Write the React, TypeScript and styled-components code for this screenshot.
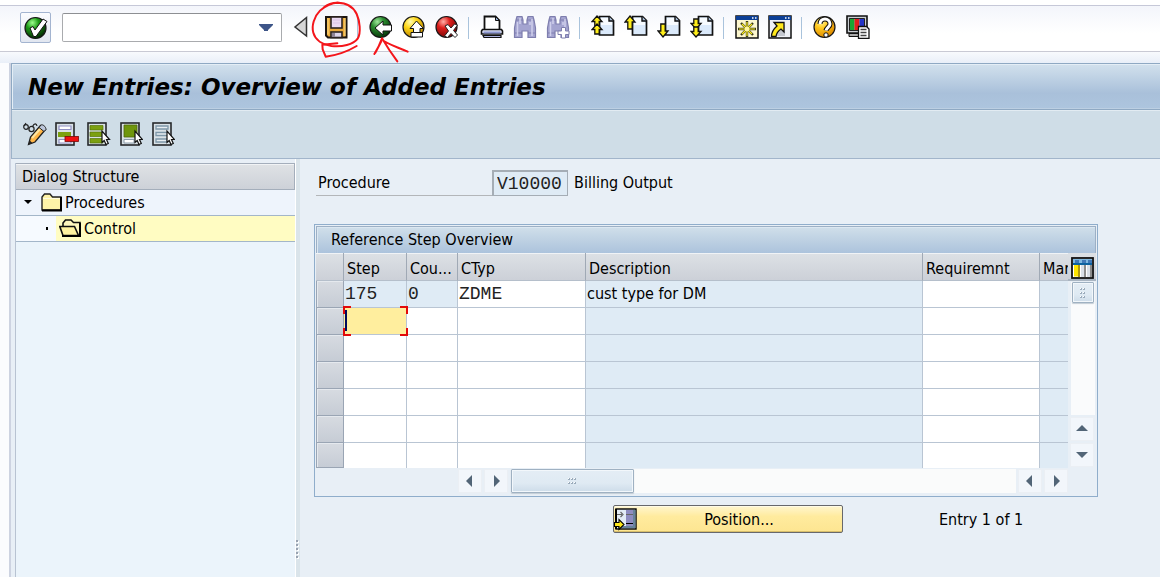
import React from "react";
import styled, { createGlobalStyle, css } from "styled-components";

const ui = `"DejaVu Sans Condensed", "Noto Sans", sans-serif`;
const mono = `"Liberation Mono", monospace`;

const GlobalStyle = createGlobalStyle`
  *, *::before, *::after { box-sizing: border-box; }
  body { margin: 0; background: #e8eff6; font-family: ${ui}; font-size: 16px; color: #000; }
  button, input { font: inherit; color: inherit; margin: 0; padding: 0; }
`;

const Page = styled.div`
  position: relative;
  display: flex;
  flex-direction: column;
  min-height: 100vh;
  background: #fff;
`;

const EnterButton = styled.button`
  display: grid;
  place-items: center;
  width: 31px;
  height: 31px;
  margin-right: 11px;
  border: 1px solid #a3b4d0;
  border-radius: 2px;
  background: linear-gradient(#fbfcfe, #e1e6f0);
`;

const CommandBox = styled.label`
  display: flex;
  align-items: center;
  width: 220px;
  height: 29px;
  margin-right: 11px;
  padding-right: 8px;
  border: 1px solid #a9abae;
  border-top-color: #8d8f93;
  border-radius: 2px;
  background: #fff;
`;

const CommandInput = styled.input`
  flex: 1;
  min-width: 0;
  border: 0;
  outline: 0;
  padding-left: 6px;
  background: transparent;
`;

const IconGroup = styled.div<{ $gap: number }>`
  display: flex;
  align-items: center;
  gap: ${(p) => p.$gap}px;
`;

const Toolbar = styled.header`
  display: flex;
  align-items: center;
  margin-top: 5px;
  padding: 6px 20px 8px;
  border-top: 1px solid #c6c8d8;
  border-bottom: 1px solid #c9cad4;
  background: linear-gradient(#f3f5fb, #fff 60%);
  ${IconGroup} { padding-bottom: 2px; }
`;

const IconButton = styled.button<{ $width?: number }>`
  display: block;
  width: ${(p) => p.$width ?? 24}px;
  height: 24px;
  border: 0;
  background: none;
  svg { display: block; }
`;

const Divider = styled.span`
  width: 1px;
  height: 22px;
  margin: 0 11px 0 9px;
  background: #a9c3dc;
`;

const Markup = styled.svg`
  position: absolute;
  left: 290px;
  top: 0;
  pointer-events: none;
`;

const Backdrop = styled.div`
  display: flex;
  flex: 1;
  flex-direction: column;
  padding: 11px 0 0 9px;
  background: linear-gradient(#f8fafd, #e9eff8) 0 0 / 100% 11px no-repeat, #fbfcfe;
`;

const Screen = styled.div`
  display: flex;
  flex: 1;
  flex-direction: column;
  border-left: 2px solid #cdd3e1;
`;

const TitleBar = styled.div`
  display: flex;
  align-items: center;
  height: 47px;
  padding: 0 16px;
  border: solid #8fa9c3;
  border-width: 1px 0 1px 1px;
  box-shadow: inset 1px 1px 0 #e4eef6, inset 0 -1px 0 #bccfe2;
  background: linear-gradient(#d2e1ed, #a9c0da 65%, #adc5de);
`;

const Title = styled.h1`
  margin: 0;
  font-family: "DejaVu Sans", sans-serif;
  font-size: 23px;
  line-height: 28px;
  font-weight: bold;
  font-style: italic;
`;

const ActionBar = styled.div`
  display: flex;
  align-items: center;
  height: 49px;
  padding-left: 11px;
  border-left: 1px solid #9db3c9;
  border-bottom: 1px solid #a2b5cb;
  box-shadow: inset 0 1px 0 #e2ebf2;
  background: #cfdde7;
`;

const Workspace = styled.div`
  display: flex;
  flex: 1;
  background: #e8eff6;
`;

const SidePanel = styled.nav`
  width: 285px;
  flex: none;
  display: flex;
  flex-direction: column;
  padding: 4px 0 0 4px;
  border-right: 1px solid #fff;
`;

const SideBody = styled.div`
  flex: 1;
  border-left: 1px solid #b8c3d2;
  background: #ebf4fb;
`;

const SideHeader = styled.h2`
  margin: 0;
  height: 27px;
  padding-left: 6px;
  border: 1px solid #a4aebb;
  border-left: 0;
  box-shadow: inset 0 1px 0 #f1f3f5;
  background: linear-gradient(#dfe2e5, #cdd1d8);
  font-size: 16px;
  line-height: 26px;
  font-weight: normal;
`;

const TreeRow = styled.div<{ $level: number }>`
  display: flex;
  height: 26px;
  border-bottom: 1px solid #a3b6c9;
  background: ${(p) => (p.$level ? "#f6faff" : "#eef4fc")};
`;

const TreeMark = styled.span<{ $level: number }>`
  display: flex;
  align-items: center;
  justify-content: flex-end;
  width: ${(p) => (p.$level ? 40 : 24)}px;
  padding-right: ${(p) => (p.$level ? 7 : 8)}px;
`;

const TreeLink = styled.a<{ $selected?: boolean }>`
  display: flex;
  flex: 1;
  align-items: center;
  gap: 3px;
  padding-left: ${(p) => (p.$selected ? 3 : 1)}px;
  color: inherit;
  text-decoration: none;
  background: ${(p) => (p.$selected ? "#fffcc2" : "transparent")};
`;

const Splitter = styled.div`
  display: flex;
  flex: none;
  align-items: flex-end;
  width: 4px;
  padding-bottom: 17px;
  background: #dae4ea;
`;

const Content = styled.main`
  flex: 1;
  min-width: 0;
  padding: 11px 62px 40px 14px;
`;

const FieldRow = styled.div`
  display: flex;
  align-items: stretch;
  height: 26px;
  margin: 0 0 28px 2px;
  line-height: 26px;
`;

const FieldLabel = styled.label`
  width: 176px;
  padding-left: 2px;
  border-bottom: 1px solid #b3b6b9;
`;

const FieldInput = styled.input`
  width: 76px;
  padding-left: 3px;
  border: 2px solid #a5adb5;
  border-width: 2px 1px 1px 2px;
  background: #dfebf5;
  color: #222;
  font-family: ${mono};
  font-size: 18px;
`;

const FieldText = styled.span`
  padding-left: 6px;
`;

const Card = styled.section`
  border: 1px solid #8fadcb;
  padding: 1px;
`;

const CardTitle = styled.h2`
  margin: 0;
  height: 27px;
  padding-left: 14px;
  border: 1px solid #9db0c5;
  border-bottom: 0;
  box-shadow: inset 1px 1px 0 #dbe7f1;
  background: linear-gradient(#d0dfea, #acc3dc);
  font-size: 16px;
  line-height: 25px;
  font-weight: normal;
`;

const GridArea = styled.div`
  display: flex;
`;

const Grid = styled.table`
  flex: 1;
  width: 0;
  table-layout: fixed;
  border-spacing: 0;
`;

const HeadCell = styled.th`
  height: 28px;
  padding: 3px 0 0 3px;
  border-right: 1px solid #a0a9b5;
  border-bottom: 1px solid #b5bfcb;
  box-shadow: inset 0 1px 0 #f0f3f6;
  background: linear-gradient(#dde1e5, #ccd0d8);
  font-weight: normal;
  text-align: left;
  white-space: nowrap;
  &:last-child { border-right: 0; }
`;

const RowMark = styled.th`
  padding: 0;
  border: solid #9aa5b4;
  border-width: 0 1px 1px 1px;
  box-shadow: inset 1px 1px 0 #e5e9ee;
  background: linear-gradient(#d7dbe1, #c6ccd5);
`;

const focusMarks = css`
  background:
    linear-gradient(#000a5c, #000a5c) 1px 2px / 2px 21px no-repeat,
    #ffee9e;
  &::after {
    content: "";
    position: absolute;
    inset: -2px -2px -2px -1px;
    pointer-events: none;
    --red: linear-gradient(#e20a0a, #e20a0a);
    background:
      var(--red) 0 0 / 8px 2px, var(--red) 0 0 / 2px 8px,
      var(--red) 100% 0 / 8px 2px, var(--red) 100% 0 / 2px 8px,
      var(--red) 0 100% / 8px 2px, var(--red) 0 100% / 2px 8px,
      var(--red) 100% 100% / 8px 2px, var(--red) 100% 100% / 2px 8px;
    background-repeat: no-repeat;
    z-index: 1;
  }
`;

const Cell = styled.td<{ $readOnly?: boolean; $mono?: boolean; $focused?: boolean }>`
  position: relative;
  height: 27px;
  padding: 0 0 0 1px;
  border-right: 1px solid #b9c5d3;
  border-bottom: 1px solid #b9c5d3;
  background: ${(p) => (p.$readOnly ? "#dfebf5" : "#fff")};
  line-height: 24px;
  white-space: nowrap;
  ${(p) => p.$mono && css`font-family: ${mono}; font-size: 18px; color: #222;`}
  ${(p) => p.$focused && focusMarks}
  &:last-child { border-right: 0; }
  tr:last-child > & { height: 25px; border-bottom: 0; }
`;

const CellInput = styled.input`
  display: block;
  width: 100%;
  height: 24px;
  border: 0;
  outline: 0;
  background: transparent;
`;

const SideRail = styled.div`
  display: flex;
  flex-direction: column;
  width: 28px;
`;

const ConfigHolder = styled.div`
  position: relative;
  height: 28px;
  padding: 3px 2px 0 3px;
  border-bottom: 2px solid #a9b5c2;
  background: linear-gradient(#dde1e5, #ccd0d8);
`;

const VTrack = styled.div`
  flex: 1;
  width: 24px;
  margin: 1px 2px 2px 3px;
  padding-left: 1px;
  background: #fafbfc;
`;

const Thumb = styled.button<{ $wide?: boolean }>`
  display: grid;
  place-items: center;
  width: ${(p) => (p.$wide ? 123 : 22)}px;
  height: ${(p) => (p.$wide ? 24 : 21)}px;
  border: 1px solid #9fb1c2;
  border-radius: 1px;
  box-shadow: inset 0 0 0 1px #f2f7fb, 0 1px 1px #c3ccd5;
  background: linear-gradient(#e4edf5, #dfeaf3 60%, #cddce9);
  svg { display: block; }
`;

const ScrollButton = styled.button`
  display: grid;
  place-items: center;
  flex: none;
  width: 24px;
  height: 24px;
  border: 1px solid #ebeff4;
  background: #f2f6fb;
  svg { display: block; }
`;

const VButtons = styled.div`
  display: flex;
  flex-direction: column;
  gap: 2px;
  padding: 0 0 1px 2px;
`;

const HScroll = styled.div`
  display: flex;
  align-items: center;
  gap: 2px;
  padding: 1px 28px 2px 142px;
`;

const HTrack = styled.div`
  flex: 1;
  height: 24px;
  margin-left: 1px;
  background: #fafbfb;
`;

const Footer = styled.div`
  display: flex;
  align-items: center;
  gap: 96px;
  margin-top: 8px;
  padding-left: 299px;
`;

const PositionButton = styled.button`
  display: flex;
  align-items: center;
  width: 230px;
  height: 28px;
  border: 1px solid #67686c;
  border-radius: 2px;
  box-shadow: inset 0 1px 0 #fffbe6, inset 0 -1px 0 #d8bf6c;
  background: linear-gradient(#fff6cf, #ffeb9e 40%, #fde591);
  span { flex: 1; }
`;

const PositionLabel = styled.span`
  padding-right: 2px;
`;

/* ---------- icons ---------- */

const Svg = ({ w = 24, h = 24, children }: { w?: number; h?: number; children: React.ReactNode }) => (
  <svg width={w} height={h} viewBox={`0 0 ${w} ${h}`} aria-hidden="true">{children}</svg>
);

const Ball = ({ id, light, mid, dark, children }: { id: string; light: string; mid: string; dark: string; children: React.ReactNode }) => (
  <Svg>
    <defs>
      <radialGradient id={id} cx=".35" cy=".25" r=".75">
        <stop offset="0" stopColor={light} />
        <stop offset=".4" stopColor={mid} />
        <stop offset="1" stopColor={dark} />
      </radialGradient>
    </defs>
    <circle cx="11.5" cy="12" r="10.5" fill={`url(#${id})`} stroke="#161616" strokeWidth="1.2" />
    {children}
  </Svg>
);

const CheckIcon = () => (
  <Ball id="ok" light="#9dff8e" mid="#1e9c17" dark="#022f02">
    <path d="M6 12l3-1.500 2 3.500L19 3l4 2.500L12 20.500H9.500z" fill="#fff" stroke="#111" strokeWidth="1" />
  </Ball>
);
const BackIcon = () => (
  <Ball id="back" light="#9ee79a" mid="#2b8c2f" dark="#083c0c">
    <path d="M6 13l8-7v4h8.500v6H14v4z" fill="#fff" stroke="#111" strokeWidth="1" />
  </Ball>
);
const UpIcon = () => (
  <Ball id="up" light="#fffdb5" mid="#ffd81a" dark="#c08a00">
    <path d="M14.500 6l7 7.500H18v4h2.500v4.500H9v-4.500h2.500v-4H8z" fill="#fff" stroke="#111" strokeWidth="1" />
    <path d="M11.500 17.500h6.500" stroke="#111" />
  </Ball>
);
const CancelIcon = () => (
  <Ball id="cancel" light="#ffb0a8" mid="#dd1f1c" dark="#7d0505">
    <path d="M10 11l3-1.500 3 3.500 3.500-4 3 1-4 5.500 4 4.500-2.500 2.500-4-4-3.500 4-3-1.500 4-5z" fill="#fff" stroke="#222" strokeWidth="1" />
  </Ball>
);
const PrevIcon = () => (
  <Svg w={16}><path d="M13.500 2.500v18.500L2 12z" fill="#d6d6d6" stroke="#333" strokeWidth="1.500" /></Svg>
);
const SaveIcon = () => (
  <Svg>
    <path d="M2 2H22.500v20.500H4L2 20.500z" fill="#e9a93a" stroke="#1b1510" strokeWidth="2" />
    <path d="M4 3v16.500M21 3v18" stroke="#ffdf86" />
    <rect x="7" y="2" width="11" height="11" fill="#ead9f2" stroke="#2b2321" strokeWidth="1.600" />
    <path d="M9 5h7M9 8h7" stroke="#d9c2e6" />
    <rect x="7" y="17" width="11" height="5.500" fill="#dcd4ea" stroke="#2b2321" strokeWidth="1.600" />
    <path d="M8 18h3v4H8z" fill="#8f8496" />
  </Svg>
);
const PrintIcon = () => (
  <Svg>
    <path d="M4.500 14V1.500h11l4 4V14" fill="#fff" stroke="#111" strokeWidth="1.800" />
    <path d="M15.500 1.500v4h4z" fill="#8fa6cc" stroke="#111" />
    <path d="M2.500 14.500h19l1 1.500v3H1.500v-3z" fill="#dfe3f6" stroke="#111" strokeWidth="1.600" />
    <path d="M3.500 17.500h17" stroke="#8d97d0" strokeWidth="2" />
    <path d="M3 20.500h18v2H4z" fill="#a9b0dc" stroke="#111" strokeWidth="1.200" />
  </Svg>
);
const Binoculars = ({ next }: { next?: boolean }) => (
  <Svg>
    <g stroke="#7e7eae" strokeWidth="1.200">
      <path d="M3 5l1-3.500h5L10 5v4h4V5l1-3.500h5L21 5l1.500 8v9.500H15V16H9v6.500H1.500V13z" fill="#a4a4d0" />
      <path d="M3 5h7M14 5h7M2 18h7M15 18h7" />
    </g>
    <path d="M4.500 7v14M7 3v6M17 7v3M19 4v17" stroke="#cfcfec" strokeWidth="1.500" />
    {next && <path d="M15.500 12.500h4v3.500H23v3.500h-3.500V23h-4v-3.500H12V16h3.500z" fill="#fff" stroke="#7e7eae" />}
  </Svg>
);

const ARROW_UP = "M6 0l5 5.500H8.200V10H3.800V5.500H1z";
const PageShape = () => (
  <g transform="translate(0 -2)">
    <path d="M8.500 3.500h10l4 4V22h-14z" fill="#dbeafb" stroke="#111" strokeWidth="1.700" />
    <path d="M10 5h8v4h3v3H10z" fill="#f7fbff" />
    <path d="M18 3.500v4.500h4.500" fill="#a9bdd8" stroke="#111" strokeWidth="1.400" />
  </g>
);
const ArrowMark = ({ x, y, down, tall }: { x: number; y: number; down?: boolean; tall?: boolean }) => (
  <path
    d={tall ? "M6 0l5 6H8.200V13H3.800V6H1z" : ARROW_UP}
    transform={down ? `translate(${x} ${y}) scale(1 -1)` : `translate(${x} ${y})`}
    fill="#ffee1a" stroke="#111" strokeWidth="1.300"
  />
);
const FirstPage = () => <Svg><PageShape /><ArrowMark x={0} y={1} /><ArrowMark x={0} y={9} /></Svg>;
const PrevPage = () => <Svg><PageShape /><ArrowMark x={0} y={1} tall /></Svg>;
const NextPage = () => <Svg><PageShape /><ArrowMark x={0} y={22} down tall /></Svg>;
const LastPage = () => <Svg><PageShape /><ArrowMark x={0} y={14} down /><ArrowMark x={0} y={22} down /></Svg>;

const WindowFrame = ({ fill }: { fill: string }) => (
  <>
    <rect x="1" y="1" width="22" height="22" fill={fill} stroke="#111" strokeWidth="1.500" />
    <path d="M1 1h22v4H1z" fill="#0c3f96" />
    <path d="M17 3h1.500M20 3h1.500" stroke="#fff" strokeWidth="1.500" />
  </>
);
const NewSession = () => (
  <Svg>
    <WindowFrame fill="#fdf7cf" />
    <g stroke="#3a3a20" strokeWidth="2.400"><path d="M12 6v16M3 14h18M6 8l12 12M18 8L6 20" /></g>
    <g stroke="#ffee1a" strokeWidth="1.200"><path d="M12 7v14M4 14h16M7 9l10 10M17 9L7 19" /></g>
    <circle cx="12" cy="14" r="2.500" fill="#fff6a0" />
  </Svg>
);
const Shortcut = () => (
  <Svg>
    <WindowFrame fill="#eef1f6" />
    <path d="M17 9v12H8z" fill="#c4c8cf" />
    <path d="M6 7.500h10v9.500l-3-3c-3 2-4.500 4-5 7.500H3.500c0-5 2-7.500 5.500-10.500z" fill="#ffe81a" stroke="#111" strokeWidth="1.300" />
  </Svg>
);
const HelpIcon = () => (
  <Ball id="help" light="#fff7a0" mid="#ffc91f" dark="#e08c00">
    <path d="M7 9c0-3.500 2.500-5 5-5s5 2 5 5-3.500 3.500-4 6.500" fill="none" stroke="#111" strokeWidth="5" />
    <path d="M7 9c0-3.500 2.500-5 5-5s5 2 5 5-3.500 3.500-4 6.500" fill="none" stroke="#fff" strokeWidth="3" />
    <circle cx="13" cy="20" r="2.200" fill="#fff" stroke="#111" />
  </Ball>
);
const LayoutIcon = () => (
  <Svg>
    <path d="M1 1h20v17H1z" fill="#c9cdd2" stroke="#111" strokeWidth="1.600" />
    <path d="M3.500 3.500h5v12h-5z" fill="#18a532" /><path d="M8.500 3.500h5v12h-5z" fill="#e11d1d" /><path d="M13.500 3.500h5v12h-5z" fill="#2434c8" />
    <path d="M3.500 3.500h15v12h-15z" fill="none" stroke="#222" />
    <path d="M3 18.500h14v3H3z" fill="#aaa" stroke="#111" />
    <path d="M12.500 11.500h8l2.500 2.500v9.500H12.500z" fill="#fff" stroke="#111" strokeWidth="1.300" />
    <path d="M14.500 14.500h6M14.500 17.500h6M14.500 20.500h6" stroke="#444" strokeWidth="1.300" />
  </Svg>
);

const EditIcon = () => (
  <Svg>
    <g fill="none" stroke="#222" strokeWidth="1.200"><circle cx="3" cy="5" r="2.300" /><circle cx="8.500" cy="7" r="2.600" /><path d="M1 4L3 1M5.500 6h1M9.500 4.500c2-4 4-3 4.500-.500" /></g>
    <path d="M5.500 22.500l2-7.500L17.500 3.500l5 4L12 20z" fill="#ffb547" stroke="#222" strokeWidth="1.300" />
    <path d="M9 16L17.500 6.500" stroke="#ffe6a3" strokeWidth="2" />
    <path d="M16 5.500l2-2.500c1.500-1 5 1.500 5 4.500l-2 2z" fill="#bcc6da" stroke="#222" />
    <path d="M5.500 22.500l1.200-4 2.800 2.500z" fill="#222" />
  </Svg>
);
const SheetFrame = ({ children }: { children: React.ReactNode }) => (
  <><rect x="1" y="1" width="18" height="22" fill="#d9e1e6" stroke="#26292b" strokeWidth="1.600" />{children}</>
);
const Pointer = () => <path d="M15 9v11.500l2.200-2 1.800 4 2.300-1-1.800-4H22.500z" fill="#fff" stroke="#111" strokeWidth="1.200" />;
const DeleteRow = () => (
  <Svg>
    <SheetFrame>
      <path d="M4 4h12v3.500H4zM4 17.500h12V21H4z" fill="#fff" stroke="#8f8fc4" strokeWidth="1.200" />
      <path d="M3 10h13v5H3z" fill="#7ca010" />
    </SheetFrame>
    <rect x="10" y="14.500" width="13.500" height="5" fill="#ee1111" stroke="#7c0808" strokeWidth=".8" />
  </Svg>
);
const SelectAll = () => (
  <Svg><SheetFrame><path d="M3 3.500h13V8H3zM3 10h13v4.500H3zM3 16.500h13V21H3z" fill="#7ca010" stroke="#567409" strokeWidth=".7" /></SheetFrame><Pointer /></Svg>
);
const SelectBlock = () => (
  <Svg><g transform="translate(1 0)"><SheetFrame><path d="M4 3h13v12H4z" fill="#6f960c" stroke="#4c6808" strokeWidth=".8" /><path d="M4 17.500h10V21H4z" fill="#fff" stroke="#8a9aa8" /></SheetFrame><Pointer /></g></Svg>
);
const DeselectAll = () => (
  <Svg>
    <g transform="translate(1 0)">
      <SheetFrame>
        <path d="M4 4h12v3H4zM4 10.500h12v3H4zM4 17h11v3H4z" fill="#e8eef2" stroke="#7d97a8" strokeWidth="1.300" />
      </SheetFrame>
      <Pointer />
    </g>
  </Svg>
);

const ClosedFolder = () => (
  <Svg w={21} h={22}>
    <path d="M1 18V5L3.500 2H9l2.500 3H20v13z" fill="#fdf3a8" stroke="#222" strokeWidth="1.400" />
    <path d="M2 6.500h17" stroke="#fffce0" /><path d="M1 18.500h19V5" fill="none" stroke="#000" strokeWidth="2" />
  </Svg>
);
const OpenFolder = () => (
  <Svg w={22} h={22}>
    <path d="M4 17.500V5L6.500 2H12l2.500 2.500H21v13z" fill="#fdf6bd" stroke="#111" strokeWidth="1.600" />
    <path d="M4 17.500L.800 8.500H15.500l4 9z" fill="#fff3a0" stroke="#111" strokeWidth="1.600" />
    <path d="M3 18h18V5" fill="none" stroke="#000" strokeWidth="2" />
  </Svg>
);
const ConfigIcon = () => (
  <Svg w={23} h={22}>
    <rect x="1" y="1" width="21" height="20" fill="#fff" stroke="#111" strokeWidth="1.800" />
    <path d="M2 2h19v4H2z" fill="#7fb8e0" /><path d="M4 3h4v3H4zM11 3h4v3h-4zM17 3h4v3h-4z" fill="#3f78b8" />
    <path d="M2 6h19v2H2z" fill="#0b62a0" />
    <path d="M3 8h4v11.500H3z" fill="#ffe500" /><path d="M7 8h2v12H7z" fill="#b09a10" />
    <path d="M10 8h3v12h-3zM16 8h3v12h-3z" fill="#d9dfe7" />
    <path d="M14 8v12M20 8v12" stroke="#8c8c8c" strokeWidth="2" />
  </Svg>
);
const PositionIcon = () => (
  <Svg>
    <rect x="2" y="2" width="20" height="20" fill="#e3ecf6" stroke="#000" strokeWidth="1.400" />
    <path d="M12 3h7v16h-7z" fill="#8e8cc0" /><path d="M19 3h2.500v18H4v-2h15z" fill="#67839b" />
    <path d="M3 7.500h5M6.500 5l2.500 2.500L6.500 10M12 7.500h7" fill="none" stroke="#666" strokeWidth="1.200" />
    <path d="M12 16.500h7" stroke="#000" />
    <path d="M2 2v20" stroke="#000" strokeWidth="2" />
    <path d="M.500 15.500H5v-3l5 5-5 5v-3H.500z" fill="#ffe81a" stroke="#000" strokeWidth="1.100" />
  </Svg>
);

const arrowPaths = {
  up: "M6 2l6 6H0z",
  down: "M0 3h12L6 9z",
  left: "M8 0v12L2 6z",
  right: "M4 0v12l6-6z",
};
const ScrollArrow = ({ dir }: { dir: keyof typeof arrowPaths }) => (
  <svg width="12" height="12" viewBox="0 0 12 12" aria-hidden="true"><path d={arrowPaths[dir]} fill="#526577" /></svg>
);
const Grip = ({ rows, cols }: { rows: number; cols: number }) => (
  <svg width={cols * 3} height={rows * 4 - 2} aria-hidden="true">
    {Array.from({ length: rows * cols }, (_, i) => (
      <g key={i} transform={`translate(${(i % cols) * 3} ${Math.floor(i / cols) * 4})`}>
        <rect width="2" height="2" fill="#9aabbb" />
        <rect width="1" height="1" fill="#fff" />
      </g>
    ))}
  </svg>
);

/* ---------- data ---------- */

const toolGroups: [string, React.ReactNode][][] = [
  [["Back", <BackIcon />], ["Exit", <UpIcon />], ["Cancel", <CancelIcon />]],
  [["Print", <PrintIcon />], ["Find", <Binoculars />], ["Find next", <Binoculars next />]],
  [["First page", <FirstPage />], ["Previous page", <PrevPage />], ["Next page", <NextPage />], ["Last page", <LastPage />]],
  [["New session", <NewSession />], ["Create shortcut", <Shortcut />]],
  [["Help", <HelpIcon />], ["Customize layout", <LayoutIcon />]],
];

const actions: [string, React.ReactNode][] = [
  ["Display or change", <EditIcon />],
  ["Delete", <DeleteRow />],
  ["Select all", <SelectAll />],
  ["Select block", <SelectBlock />],
  ["Deselect all", <DeselectAll />],
];

const columns: { title: string; width?: number; readOnly?: boolean; mono?: boolean }[] = [
  { title: "Step", width: 63, mono: true },
  { title: "Cou...", width: 51, mono: true },
  { title: "CTyp", width: 128, mono: true },
  { title: "Description", readOnly: true },
  { title: "Requiremnt", width: 117, mono: true },
  { title: "Mar", width: 28, readOnly: true },
];

const firstRow = ["175", "0", "ZDME", "cust type for DM", "", ""];
const emptyRows = [2, 3, 4, 5, 6, 7];

export default function App() {
  return (
    <Page>
      <GlobalStyle />
      <Toolbar>
        <EnterButton aria-label="Enter"><CheckIcon /></EnterButton>
        <CommandBox>
          <CommandInput aria-label="Command" />
          <svg width="14" height="8" aria-hidden="true"><path d="M0 0h14v1L9 6v1H5V6L0 1z" fill="#3d5588" /></svg>
        </CommandBox>
        <IconGroup $gap={15}>
          <IconButton $width={16} aria-label="Hide command field"><PrevIcon /></IconButton>
          <IconButton aria-label="Save"><SaveIcon /></IconButton>
        </IconGroup>
        {toolGroups.map((group, i) => (
          <React.Fragment key={i}>
            <Divider />
            <IconGroup $gap={9}>
              {group.map(([name, icon]) => <IconButton key={name} aria-label={name}>{icon}</IconButton>)}
            </IconGroup>
          </React.Fragment>
        ))}
      </Toolbar>
      <Backdrop>
        <Screen>
          <TitleBar><Title>New Entries: Overview of Added Entries</Title></TitleBar>
          <ActionBar>
            <IconGroup $gap={8}>
              {actions.map(([name, icon]) => <IconButton key={name} aria-label={name}>{icon}</IconButton>)}
            </IconGroup>
          </ActionBar>
          <Workspace>
            <SidePanel aria-label="Dialog structure">
              <SideBody>
                <SideHeader>Dialog Structure</SideHeader>
                <TreeRow $level={0}>
                  <TreeMark $level={0}>
                    <svg width="8" height="5" aria-hidden="true"><path d="M0 0h8L4 4z" /></svg>
                  </TreeMark>
                  <TreeLink href="#procedures"><ClosedFolder />Procedures</TreeLink>
                </TreeRow>
                <TreeRow $level={1}>
                  <TreeMark $level={1}>
                    <svg width="3" height="3" aria-hidden="true"><path d="M0 0h2v3H0z" /></svg>
                  </TreeMark>
                  <TreeLink href="#control" $selected><OpenFolder />Control</TreeLink>
                </TreeRow>
              </SideBody>
            </SidePanel>
            <Splitter>
              <svg width="4" height="20" aria-hidden="true">
                {[0, 4, 8, 12, 16].map((y) => (
                  <g key={y}><rect x="1" y={y + 1} width="2" height="2" fill="#fff" /><rect y={y} width="2" height="2" fill="#98a2b0" /></g>
                ))}
              </svg>
            </Splitter>
            <Content>
              <FieldRow>
                <FieldLabel htmlFor="procedure">Procedure</FieldLabel>
                <FieldInput id="procedure" defaultValue="V10000" readOnly />
                <FieldText>Billing Output</FieldText>
              </FieldRow>
              <Card>
                <CardTitle>Reference Step Overview</CardTitle>
                <GridArea>
                  <Grid>
                    <colgroup>
                      <col style={{ width: 28 }} />
                      {columns.map((c) => <col key={c.title} style={{ width: c.width }} />)}
                    </colgroup>
                    <thead>
                      <tr>
                        <HeadCell aria-label="Row selection" />
                        {columns.map((c) => <HeadCell key={c.title} scope="col">{c.title}</HeadCell>)}
                      </tr>
                    </thead>
                    <tbody>
                      <tr>
                        <RowMark scope="row" aria-label="Row 1" />
                        {columns.map((c, i) => {
                          const editable = i === 2 || i === 4;
                          return (
                            <Cell key={c.title} $readOnly={!editable} $mono={c.mono}>
                              {editable ? <CellInput aria-label={`${c.title}, row 1`} defaultValue={firstRow[i]} /> : firstRow[i]}
                            </Cell>
                          );
                        })}
                      </tr>
                      {emptyRows.map((row) => (
                        <tr key={row}>
                          <RowMark scope="row" aria-label={`Row ${row}`} />
                          {columns.map((c, i) => (
                            <Cell key={c.title} $readOnly={c.readOnly} $mono={c.mono} $focused={row === 2 && i === 0}>
                              {!c.readOnly && <CellInput aria-label={`${c.title}, row ${row}`} />}
                            </Cell>
                          ))}
                        </tr>
                      ))}
                    </tbody>
                  </Grid>
                  <SideRail>
                    <ConfigHolder>
                      <IconButton aria-label="Table settings"><ConfigIcon /></IconButton>
                    </ConfigHolder>
                    <VTrack><Thumb aria-label="Scroll rows"><Grip rows={3} cols={2} /></Thumb></VTrack>
                    <VButtons>
                      <ScrollButton aria-label="Scroll up"><ScrollArrow dir="up" /></ScrollButton>
                      <ScrollButton aria-label="Scroll down"><ScrollArrow dir="down" /></ScrollButton>
                    </VButtons>
                  </SideRail>
                </GridArea>
                <HScroll>
                  <ScrollButton aria-label="First column"><ScrollArrow dir="left" /></ScrollButton>
                  <ScrollButton aria-label="Next column"><ScrollArrow dir="right" /></ScrollButton>
                  <HTrack><Thumb $wide aria-label="Scroll columns"><Grip rows={2} cols={3} /></Thumb></HTrack>
                  <ScrollButton aria-label="Previous column"><ScrollArrow dir="left" /></ScrollButton>
                  <ScrollButton aria-label="Last column"><ScrollArrow dir="right" /></ScrollButton>
                </HScroll>
              </Card>
              <Footer>
                <PositionButton><PositionIcon /><PositionLabel>Position...</PositionLabel></PositionButton>
                <div>Entry 1 of 1</div>
              </Footer>
            </Content>
          </Workspace>
        </Screen>
      </Backdrop>
      <Markup width="180" height="66" viewBox="0 0 540 198" fill="none" stroke="#f4161b" strokeWidth="6" strokeLinecap="round" strokeLinejoin="round" aria-hidden="true">
        <path d="M150 9C128 6 104 18 90 32C72 50 64 78 70 98C76 120 98 134 124 138C156 142 190 134 203 116C214 98 209 62 200 42C190 20 172 8 142 8C128 8 112 13 102 22" />
        <path d="M142 130L97 134L98 148L107 170C140 166 170 156 200 138" />
        <path d="M276 115C270 132 262 148 253 162M256 158L274 124M276 115L298 150L322 184M276 118C290 132 320 140 353 155" />
      </Markup>
    </Page>
  );
}
